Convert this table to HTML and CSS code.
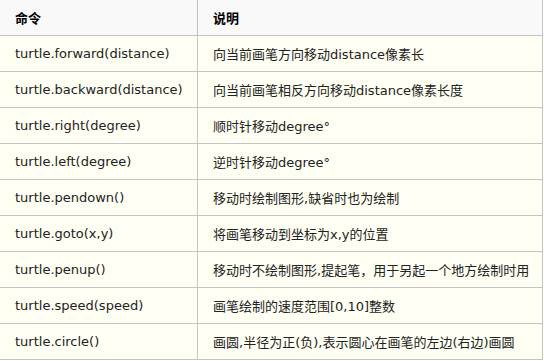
FILE: index.html
```html
<!DOCTYPE html>
<html>
<head>
<meta charset="utf-8">
<link rel="stylesheet" href="styles.css">
</head>
<body>
<div class="table">
  <div class="row head"><div class="cell c1">命令</div><div class="cell c2">说明</div></div>
  <div class="row"><div class="cell c1">turtle.forward(distance)</div><div class="cell c2">向当前画笔方向移动distance像素长</div></div>
  <div class="row"><div class="cell c1">turtle.backward(distance)</div><div class="cell c2">向当前画笔相反方向移动distance像素长度</div></div>
  <div class="row"><div class="cell c1">turtle.right(degree)</div><div class="cell c2">顺时针移动degree°</div></div>
  <div class="row"><div class="cell c1">turtle.left(degree)</div><div class="cell c2">逆时针移动degree°</div></div>
  <div class="row"><div class="cell c1">turtle.pendown()</div><div class="cell c2">移动时绘制图形,缺省时也为绘制</div></div>
  <div class="row"><div class="cell c1">turtle.goto(x,y)</div><div class="cell c2">将画笔移动到坐标为x,y的位置</div></div>
  <div class="row"><div class="cell c1">turtle.penup()</div><div class="cell c2">移动时不绘制图形,提起笔，用于另起一个地方绘制时用</div></div>
  <div class="row"><div class="cell c1">turtle.speed(speed)</div><div class="cell c2">画笔绘制的速度范围[0,10]整数</div></div>
  <div class="row"><div class="cell c1">turtle.circle()</div><div class="cell c2">画圆,半径为正(负),表示圆心在画笔的左边(右边)画圆</div></div>
</div>
</body>
</html>
```
FILE: styles.css
```css
html, body {
  margin: 0;
  padding: 0;
  background: #ffffff;
}
.table {
  width: 543px;
  font-family: "DejaVu Sans", "Noto Sans CJK SC", sans-serif;
  font-size: 13px;
  color: #222222;
}
.row {
  display: grid;
  grid-template-columns: 198px 345px;
  height: 35px;
  border-bottom: 1px solid #c4c4c4;
  background: #fffff4;
}
.row.head {
  background: #f9f9f9;
  color: #000000;
  font-weight: bold;
}
.cell {
  display: flex;
  align-items: center;
  padding-left: 15px;
  border-right: 1px solid #c4c4c4;
  white-space: nowrap;
  overflow: hidden;
}
.c2 {
  padding-left: 15px;
}
```
